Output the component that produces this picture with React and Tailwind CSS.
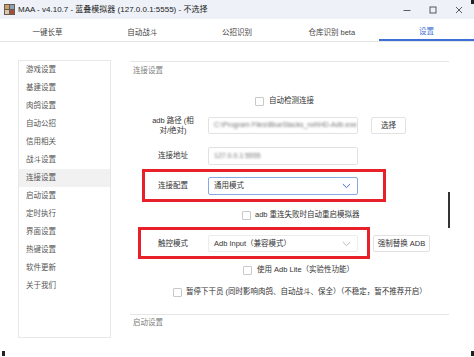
export default function App() {
  const tabs = ["一键长草", "自动战斗", "公招识别", "仓库识别 beta", "设置"];
  const side = ["游戏设置", "基建设置", "肉鸽设置", "自动公招", "信用相关", "战斗设置", "连接设置", "启动设置", "定时执行", "界面设置", "热键设置", "软件更新", "关于我们"];
  const Check = () => (
    <span className="inline-block w-[9px] h-[9px] border border-[#c8c8c8] rounded-[1px] bg-white shrink-0" />
  );
  const Chevron = ({ c }) => (
    <svg width="9" height="6" viewBox="0 0 9 6" className="shrink-0">
      <path d="M0.8 1 L4.5 4.6 L8.2 1" fill="none" stroke={c} strokeWidth="1" />
    </svg>
  );
  return (
    <div className="relative w-[474px] h-[357px] bg-white overflow-hidden text-[7.5px] text-[#333] font-['Liberation_Sans','Noto_Sans_CJK_SC',sans-serif]">
      {/* title bar */}
      <div className="h-[19px] bg-[#eef2f8] flex items-center">
        <svg width="11" height="11" viewBox="0 0 11 11" className="ml-[4px]">
          <rect x="0" y="0" width="11" height="11" fill="#6b5a4a" />
          <rect x="1" y="1" width="4" height="4" fill="#c9a06a" />
          <rect x="6" y="1" width="4" height="4" fill="#8aa0c0" />
          <rect x="1" y="6" width="4" height="4" fill="#d8c8b0" />
          <rect x="6" y="6" width="4" height="4" fill="#a05040" />
        </svg>
        <span className="ml-[3px] text-[#222] text-[8px]">MAA - v4.10.7 - 蓝叠模拟器 (127.0.0.1:5555) - 不选择</span>
        <div className="ml-auto flex items-center h-full">
          <div className="w-[26px] flex justify-center">
            <svg width="8" height="8" viewBox="0 0 8 8"><path d="M0.5 4.5 H7.5" stroke="#333" strokeWidth="0.8" /></svg>
          </div>
          <div className="w-[26px] flex justify-center">
            <svg width="8" height="8" viewBox="0 0 8 8"><rect x="1" y="1" width="6" height="6" fill="none" stroke="#333" strokeWidth="0.8" /></svg>
          </div>
          <div className="w-[26px] flex justify-center mr-[2px]">
            <svg width="8" height="8" viewBox="0 0 8 8"><path d="M1 1 L7 7 M7 1 L1 7" stroke="#333" strokeWidth="0.8" /></svg>
          </div>
        </div>
      </div>
      {/* tabs */}
      <div className="flex h-[23px] border-b border-[#e4e4e4]">
        {tabs.map((t, i) => (
          <div key={t} className={"flex-1 flex items-center justify-center pt-[5px] " + (i === 4 ? "text-[#3d6fd6] border-b-2 border-[#3d6fd6]" : "text-[#444]")}>
            {t}
          </div>
        ))}
      </div>
      {/* body */}
      <div className="flex pl-[18px] pt-[18px]">
        <div className="w-[93px] h-[278px] border border-[#e8e8e8] bg-white">
          {side.map((s, i) => (
            <div key={s} className={"h-[18px] flex items-center pl-[7px] text-[#555] " + (i === 6 ? "bg-[#f1f1f1]" : "")}>
              {s}
            </div>
          ))}
        </div>
        <div className="relative w-[319px] ml-[19px] mt-px">
          <div className="border-t border-[#e6e6e6] h-[19px] pl-[3px] flex items-center text-[#808080]">连接设置</div>
          <div className="mt-[14px] h-[14px] flex items-center pl-[125px] gap-[5px]">
            <Check />
            <span>自动检测连接</span>
          </div>
          <div className="mt-[9px] h-[17px] flex items-center">
            <div className="ml-[12px] w-[62px] flex justify-center">
              <div className="w-[46px] text-center leading-[10px]">adb 路径 (相对/绝对)</div>
            </div>
            <div className="ml-[4px] w-[150px] h-full border border-[#e2e2e2] rounded-[2px] flex items-center pl-[5px] overflow-hidden">
              <span className="blur-[0.8px] text-[#777] whitespace-nowrap text-[7px]">C:\Program Files\BlueStacks_nxt\HD-Adb.exe</span>
            </div>
            <div className="ml-[13px] w-[35px] h-full border border-[#e2e2e2] rounded-[2px] flex items-center justify-center">选择</div>
          </div>
          <div className="mt-[13px] h-[18px] flex items-center">
            <div className="ml-[12px] w-[62px] text-center">连接地址</div>
            <div className="ml-[4px] w-[150px] h-full border border-[#e2e2e2] rounded-[2px] flex items-center pl-[5px] overflow-hidden">
              <span className="blur-[0.8px] text-[#777] whitespace-nowrap text-[7px]">127.0.0.1:5555</span>
            </div>
          </div>
          <div className="mt-[12px] h-[18px] flex items-center">
            <div className="ml-[12px] w-[62px] text-center">连接配置</div>
            <div className="ml-[4px] w-[150px] h-full border border-[#88a8e4] rounded-[2px] flex items-center pl-[5px] pr-[6px] justify-between">
              <span>通用模式</span>
              <Chevron c="#3d6fd6" />
            </div>
          </div>
          <div className="mt-[13px] h-[14px] flex items-center pl-[112px] gap-[4px]">
            <Check />
            <span>adb 重连失败时自动重启模拟器</span>
          </div>
          <div className="mt-[13px] h-[17px] flex items-center">
            <div className="ml-[12px] w-[62px] text-center">触控模式</div>
            <div className="ml-[4px] w-[150px] h-full border border-[#ececec] rounded-[2px] flex items-center pl-[5px] pr-[6px] justify-between">
              <span>Adb Input（兼容模式）</span>
              <Chevron c="#bbb" />
            </div>
            <div className="ml-[15px] w-[57px] h-full border border-[#e2e2e2] rounded-[2px] flex items-center justify-center">强制替换 ADB</div>
          </div>
          <div className="mt-[11px] h-[14px] flex items-center pl-[113px] gap-[5px]">
            <Check />
            <span>使用 Adb Lite（实验性功能）</span>
          </div>
          <div className="mt-[8px] h-[14px] flex items-center pl-[43px] gap-[4px]">
            <Check />
            <span>暂停下干员 (同时影响肉鸽、自动战斗、保全）（不稳定，暂不推荐开启）</span>
          </div>
          <div className="mt-[15px] border-t border-[#e6e6e6] h-[17px] pl-[3px] flex items-center text-[#808080]">启动设置</div>
          {/* annotation boxes */}
          <div className="absolute left-[12px] top-[108px] w-[244px] h-[33px] border-[3px] border-[#e8202a]" />
          <div className="absolute left-[8px] top-[166px] w-[232px] h-[32px] border-[3px] border-[#e8202a]" />
        </div>
      </div>
      {/* scrollbar */}
      <div className="absolute left-[448px] top-[192px] w-[1.5px] h-[36px] bg-[#333]" />
      {/* corner artifacts */}
      <div className="absolute right-0 top-0 w-[3px] h-[4px] bg-[#222]" />
      <div className="absolute right-0 bottom-[1px] w-[3px] h-[5px] bg-[#222]" />
      <div className="absolute left-[2px] bottom-[1px] w-[3px] h-[5px] bg-[#222]" />
    </div>
  );
}
